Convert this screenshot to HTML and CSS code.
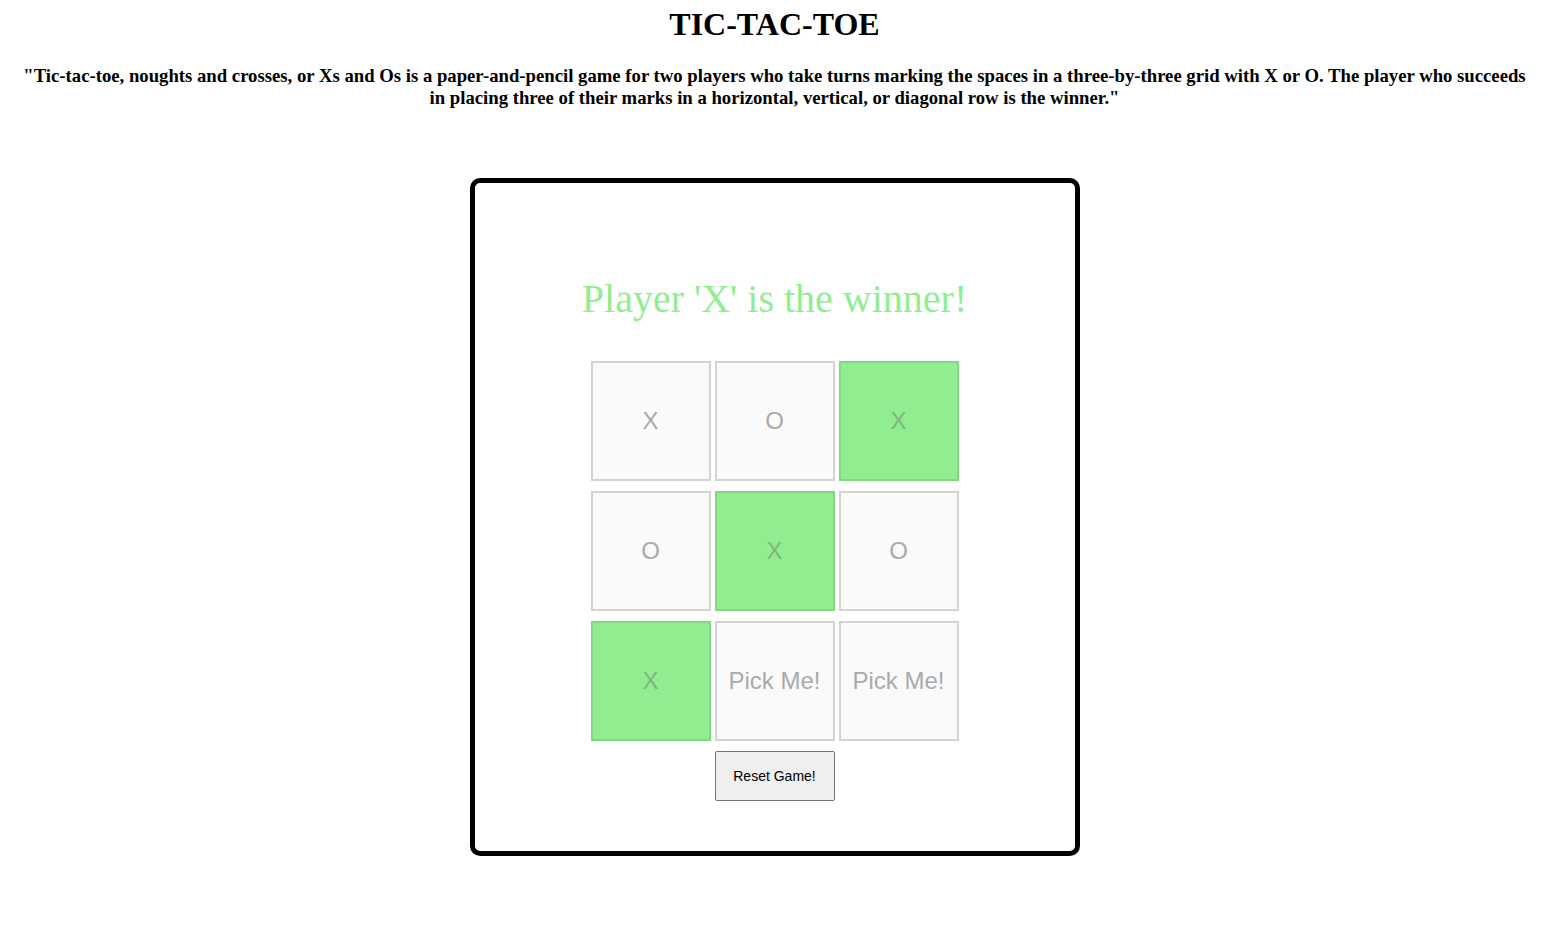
FILE: index.html
```html
<!DOCTYPE html>
<html>
<head>
<meta charset="utf-8">
<title>Tic-Tac-Toe</title>
<link rel="stylesheet" href="styles.css">
</head>
<body>
<h1 class="title">TIC-TAC-TOE</h1>
<p class="intro">"Tic-tac-toe, noughts and crosses, or Xs and Os is a paper-and-pencil game for two players who take turns marking the spaces in a three-by-three grid with X or O. The player who succeeds in placing three of their marks in a horizontal, vertical, or diagonal row is the winner."</p>
<div class="stage">
  <div class="board-box">
    <h2 class="status">Player 'X' is the winner!</h2>
    <div class="grid">
      <button class="cell">X</button>
      <button class="cell">O</button>
      <button class="cell win">X</button>
      <button class="cell">O</button>
      <button class="cell win">X</button>
      <button class="cell">O</button>
      <button class="cell win">X</button>
      <button class="cell">Pick Me!</button>
      <button class="cell">Pick Me!</button>
    </div>
    <button class="reset">Reset Game!</button>
  </div>
</div>
</body>
</html>
```

FILE: styles.css
```css
html, body {
  background: #ffffff;
}
body {
  margin: 0 8px;
  font-family: "Liberation Serif", "Times New Roman", serif;
  color: #000;
}
.title {
  margin: 6px 0 0;
  font-size: 32px;
  line-height: 37px;
  font-weight: bold;
  text-align: center;
}
.intro {
  margin: 22px 0 0;
  padding: 0 10px;
  font-size: 18.72px;
  line-height: 22px;
  font-weight: bold;
  text-align: center;
}
.stage {
  display: flex;
  justify-content: center;
  margin-top: 69px;
}
.board-box {
  width: 600px;
  border: 5px solid #000;
  border-radius: 10px;
  padding: 93px 0 50px;
  display: flex;
  flex-direction: column;
  align-items: center;
}
.status {
  margin: 0 0 39px;
  font-size: 40px;
  line-height: 46px;
  font-weight: normal;
  color: #90ee90;
}
.grid {
  display: grid;
  grid-template-columns: repeat(3, 120px);
  grid-auto-rows: 120px;
  column-gap: 4px;
  row-gap: 10px;
}
.cell {
  box-sizing: border-box;
  width: 120px;
  height: 120px;
  margin: 0;
  padding: 0;
  background: #fafafa;
  border: 2px solid #d3d3d3;
  font-family: "Liberation Sans", Arial, sans-serif;
  font-size: 24px;
  color: #aaaaaa;
}
.cell.win {
  background: #90ee90;
  border-color: #80d880;
  color: #7fb67f;
}
.reset {
  box-sizing: border-box;
  margin-top: 10px;
  width: 120px;
  height: 50px;
  background: #efefef;
  border: 1px solid #767676;
  border-radius: 2px;
  font-family: "Liberation Sans", Arial, sans-serif;
  font-size: 14px;
  color: #000;
}
```
